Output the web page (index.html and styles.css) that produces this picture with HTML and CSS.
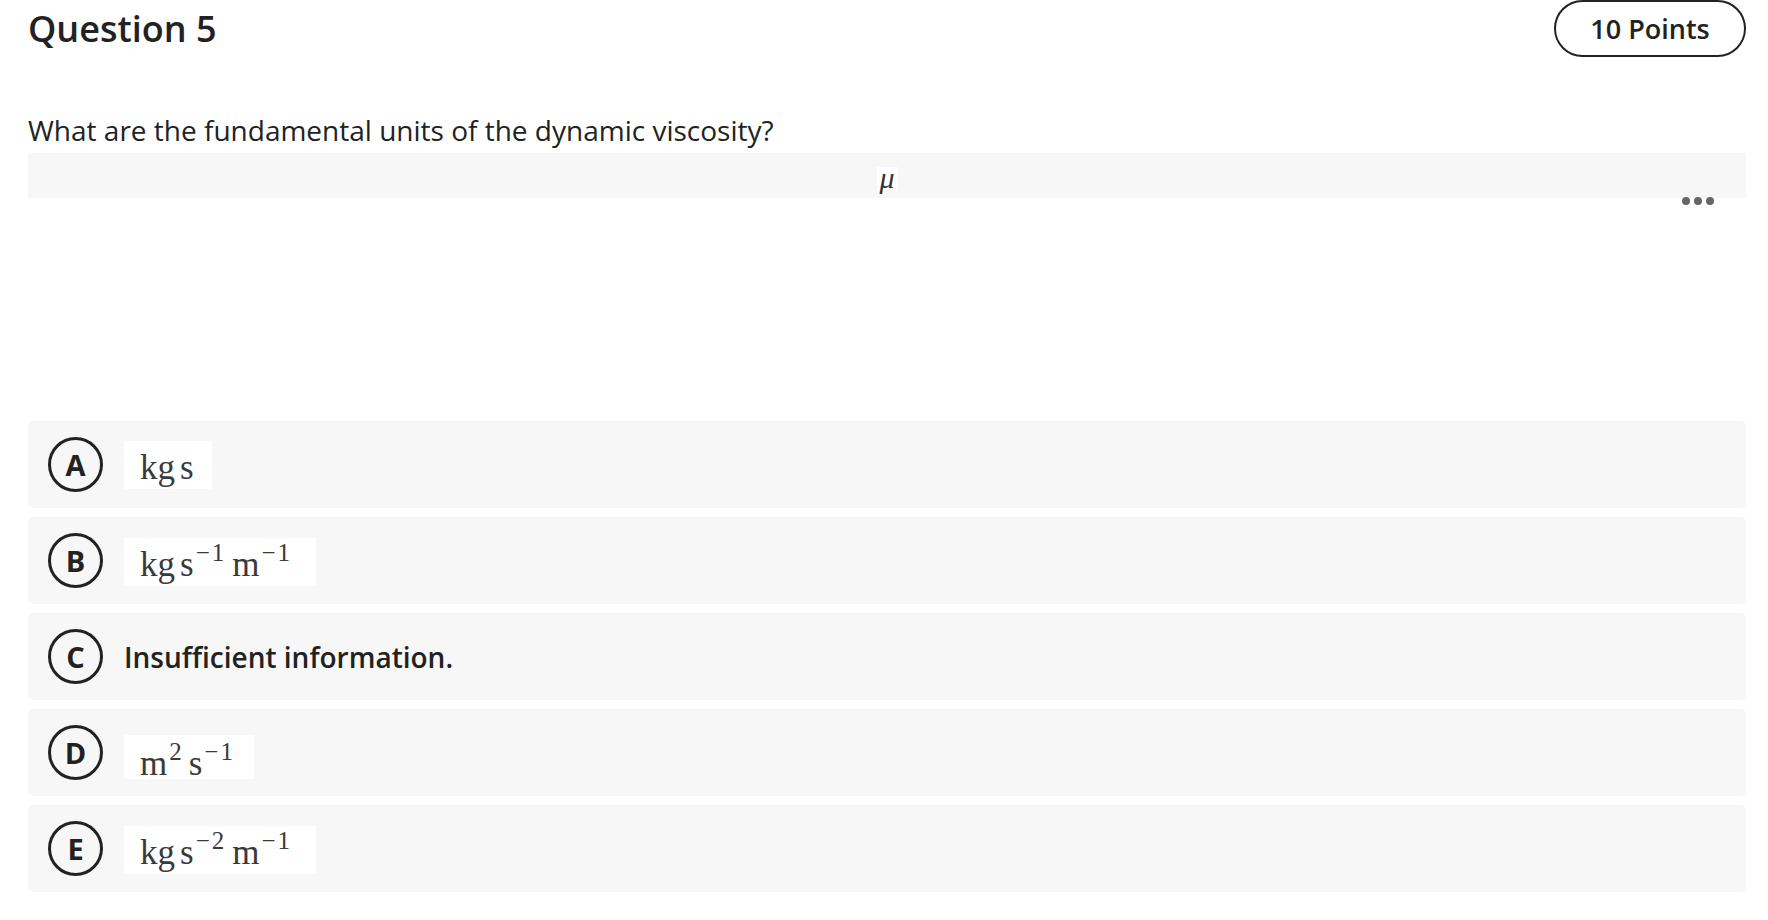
FILE: index.html
```html
<!DOCTYPE html>
<html lang="en">
<head>
    <meta charset="UTF-8">
    <meta name="viewport" content="width=device-width, initial-scale=1.0">
    <title>Question 5</title>
    <link rel="stylesheet" href="styles.css">
</head>
<body>
    <div class="question">
        <div class="question-header">
            <h2>Question 5</h2>
            <span class="points">10 Points</span>
        </div>

        <p class="question-text">What are the fundamental units of the dynamic viscosity?</p>

        <div class="formula-bar">
            <span class="formula">μ</span>
            <span class="more-dots"><i></i><i></i><i></i></span>
        </div>

        <ul class="options">
            <li class="option">
                <span class="letter">A</span>
                <span class="math math-a">kg<span class="thin"></span>s</span>
            </li>
            <li class="option">
                <span class="letter">B</span>
                <span class="math math-b">kg<span class="thin"></span>s<sup>−1</sup><span class="gap"></span>m<sup>−1</sup></span>
            </li>
            <li class="option">
                <span class="letter">C</span>
                <span class="option-text">Insufficient information.</span>
            </li>
            <li class="option">
                <span class="letter">D</span>
                <span class="math math-d">m<sup>2</sup><span class="thin"></span>s<sup>−1</sup></span>
            </li>
            <li class="option">
                <span class="letter">E</span>
                <span class="math math-b">kg<span class="thin"></span>s<sup>−2</sup><span class="gap"></span>m<sup>−1</sup></span>
            </li>
        </ul>
    </div>
</body>
</html>
```

FILE: styles.css
```css
body {
    font-family: "Open Sans", Arial, sans-serif;
    background-color: #fff;
    color: #222;
    margin: 0;
    padding: 0 22px 0 28px;
}

.question-header {
    display: flex;
    justify-content: space-between;
    align-items: center;
    height: 57px;
}

.question-header h2 {
    margin: 0;
    font-size: 36px;
    font-weight: 600;
    color: #222;
}

.points {
    box-sizing: border-box;
    width: 192px;
    height: 57px;
    border: 2px solid #222;
    border-radius: 29px;
    display: flex;
    justify-content: center;
    align-items: center;
    font-size: 27px;
    font-weight: 600;
}

.question-text {
    margin: 53px 0 0;
    font-size: 28px;
    line-height: 40px;
    color: #222;
}

.formula-bar {
    position: relative;
    box-sizing: border-box;
    margin-top: 3px;
    height: 45px;
    padding-top: 14px;
    background-color: #f7f7f7;
    display: flex;
    justify-content: center;
}

.formula {
    width: 21px;
    height: 24px;
    background: #fff;
    font-family: "Liberation Serif", serif;
    font-style: italic;
    font-size: 30px;
    line-height: 22px;
    text-align: center;
    color: #333;
}

.more-dots {
    position: absolute;
    right: 32px;
    bottom: -7px;
    display: flex;
    gap: 4px;
}

.more-dots i {
    width: 8px;
    height: 8px;
    border-radius: 50%;
    background: #666;
}

.options {
    list-style: none;
    margin: 223px 0 0;
    padding: 0;
}

.option {
    display: flex;
    align-items: center;
    height: 87px;
    margin-bottom: 9px;
    padding-left: 20px;
    background-color: #f7f7f7;
    border-radius: 5px;
}

.letter {
    box-sizing: border-box;
    flex: none;
    width: 55px;
    height: 55px;
    margin-right: 21px;
    border: 3px solid #222;
    border-radius: 50%;
    display: flex;
    justify-content: center;
    align-items: center;
    font-size: 29px;
    font-weight: 700;
}

.option-text {
    font-size: 28px;
    font-weight: 600;
}

.math {
    box-sizing: border-box;
    height: 48px;
    padding: 14px 0 0 16px;
    background: #fff;
    font-family: "Liberation Serif", serif;
    font-size: 35px;
    line-height: 26px;
    color: #3a3a3a;
    white-space: nowrap;
}

.math sup {
    font-size: 25px;
    line-height: 0;
    vertical-align: 15px;
    letter-spacing: 2px;
    margin-left: 2px;
}

.math .thin {
    display: inline-block;
    width: 5px;
}

.math .gap {
    display: inline-block;
    width: 6px;
}

.math-a {
    width: 88px;
}

.math-b {
    width: 192px;
    margin-top: 3px;
}

.math-d {
    width: 130px;
    height: 44px;
    margin-top: 8px;
    padding-top: 16px;
}
```
